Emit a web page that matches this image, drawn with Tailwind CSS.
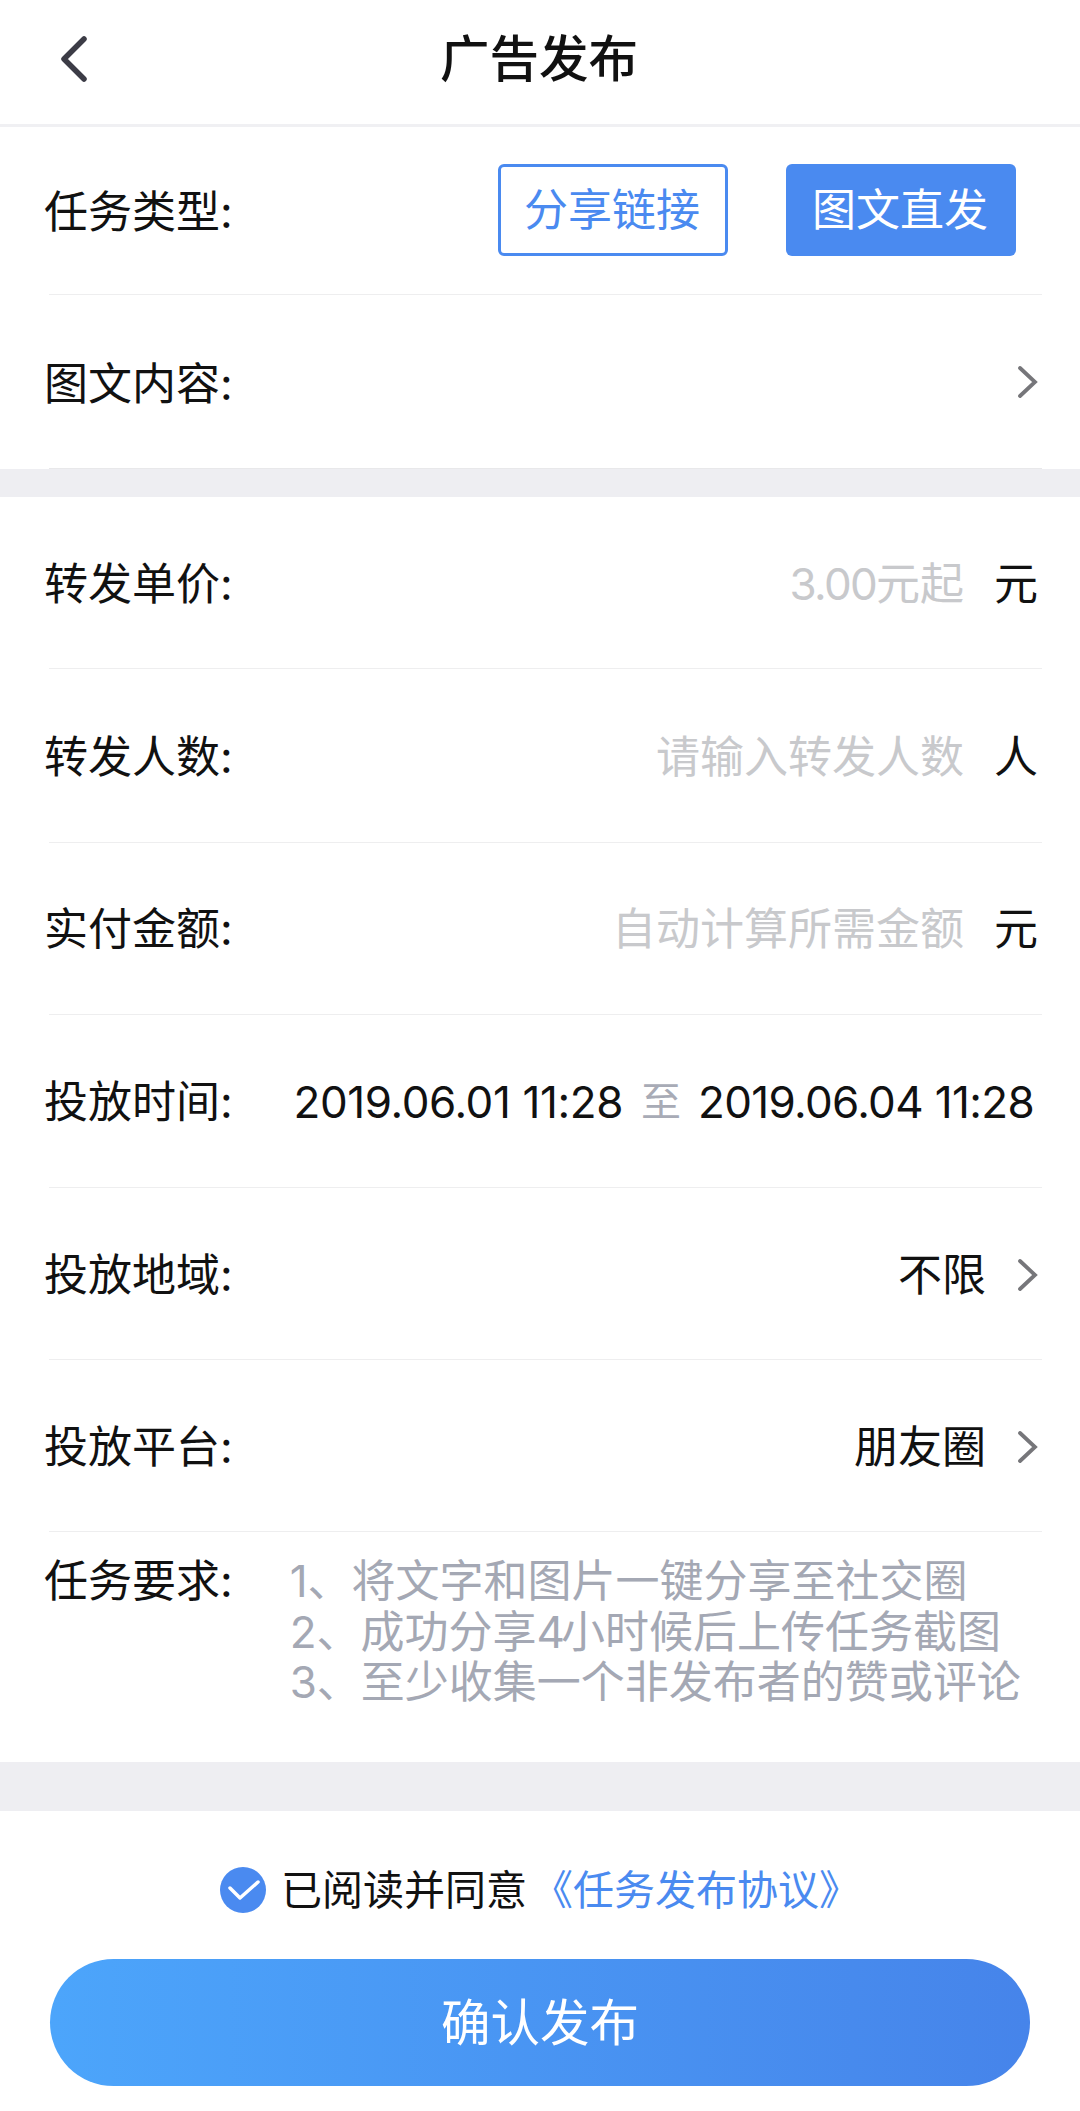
<!DOCTYPE html>
<html lang="zh-CN">
<head>
<meta charset="utf-8">
<script src="https://cdn.jsdelivr.net/npm/@tailwindcss/browser@4"></script>
</head>
<body class="m-0 bg-white font-['Inter','Noto_Sans_CJK_SC',sans-serif] text-[#111111] text-[44px] leading-[50px]">
<div class="w-[1080px] h-[2111px] flex flex-col overflow-hidden">
  <header class="h-[127px] shrink-0 border-b-[3px] border-[#f0f0f3] flex items-center justify-center relative">
    <svg class="absolute left-[59px] top-[34px]" width="30" height="50" viewBox="0 0 30 50" fill="none"><path d="M25 5 L5 25 L25 45" stroke="#3c3c46" stroke-width="5.5" stroke-linecap="round" stroke-linejoin="round"/></svg>
    <h1 class="text-[49.5px] font-medium leading-[60px] -mt-[6px] -ml-[2px]">广告发布</h1>
  </header>
  <section class="shrink-0 pl-[49px] pr-[38px]">
    <div class="h-[168px] border-b border-[#eeeeef] flex items-center justify-between">
      <span class="-ml-[5px] pt-[2px]">任务类型:</span>
      <div class="flex gap-[58px] mr-[26px] -mt-[2px]">
        <span class="w-[230px] h-[92px] rounded-[6px] border-[3px] border-[#4a8af0] text-[#4a8af0] flex items-center justify-center pt-[1px]"><span class="-ml-[2px]">分享链接</span></span>
        <span class="w-[230px] h-[92px] rounded-[6px] bg-[#4a8af0] text-white flex items-center justify-center pt-[1px]"><span class="-ml-[2px]">图文直发</span></span>
      </div>
    </div>
    <div class="h-[174px] flex items-center justify-between border-b border-[#e8e8ea]">
      <span class="-ml-[5px] pt-[4px]">图文内容:</span>
      <svg width="22" height="32" viewBox="0 0 22 32" fill="none" class="mr-[3px]"><path d="M3 2 L18 16 L3 30" stroke="#76767a" stroke-width="3.8" stroke-linecap="round" stroke-linejoin="miter"/></svg>
    </div>
  </section>
  <div class="h-[28px] shrink-0 bg-[#eeeef2]"></div>
  <section class="shrink-0 pl-[49px] pr-[38px]">
    <div class="h-[172px] border-b border-[#eeeeef] flex items-center pt-[2px]">
      <span class="-ml-[5px]">转发单价:</span>
      <span class="ml-auto text-[#c8c9cc]"><span class="tracking-[-1.7px]">3.00</span>元起</span>
      <span class="ml-[30px] mr-[4px]">元</span>
    </div>
    <div class="h-[174px] border-b border-[#eeeeef] flex items-center pt-[2px]">
      <span class="-ml-[5px]">转发人数:</span>
      <span class="ml-auto text-[#c8c9cc]">请输入转发人数</span>
      <span class="ml-[30px] mr-[4px]">人</span>
    </div>
    <div class="h-[172px] border-b border-[#eeeeef] flex items-center">
      <span class="-ml-[5px]">实付金额:</span>
      <span class="ml-auto text-[#c8c9cc]">自动计算所需金额</span>
      <span class="ml-[30px] mr-[4px]">元</span>
    </div>
    <div class="h-[173px] border-b border-[#eeeeef] flex items-center pt-[2px]">
      <span class="-ml-[5px]">投放时间:</span>
      <span class="ml-auto tracking-[-0.4px]">2019.06.01 11:28</span>
      <span class="ml-[18px] mr-[17px] text-[#a8abb6] text-[40px]">至</span>
      <span class="tracking-[-0.65px] mr-[8px]">2019.06.04 11:28</span>
    </div>
    <div class="h-[172px] border-b border-[#eeeeef] flex items-center pt-[2px]">
      <span class="-ml-[5px]">投放地域:</span>
      <span class="ml-auto">不限</span>
      <svg width="22" height="32" viewBox="0 0 22 32" fill="none" class="ml-[31px] mr-[3px]"><path d="M3 2 L18 16 L3 30" stroke="#76767a" stroke-width="3.8" stroke-linecap="round" stroke-linejoin="miter"/></svg>
    </div>
    <div class="h-[172px] border-b border-[#eeeeef] flex items-center pt-[2px]">
      <span class="-ml-[5px]">投放平台:</span>
      <span class="ml-auto">朋友圈</span>
      <svg width="22" height="32" viewBox="0 0 22 32" fill="none" class="ml-[31px] mr-[3px]"><path d="M3 2 L18 16 L3 30" stroke="#76767a" stroke-width="3.8" stroke-linecap="round" stroke-linejoin="miter"/></svg>
    </div>
    <div class="h-[230px] flex items-start pt-[24px]">
      <span class="-ml-[5px] shrink-0">任务要求:</span>
      <div class="ml-[57px] text-[#a4a8b4] whitespace-nowrap">
        <p>1、将文字和图片一键分享至社交圈</p>
        <p class="pt-[1px]">2、成功分享<span class="tracking-[-4px]">4</span>小时候后上传任务截图</p>
        <p>3、至少收集一个非发布者的赞或评论</p>
      </div>
    </div>
  </section>
  <div class="h-[49px] shrink-0 bg-[#eeeef2]"></div>
  <section class="shrink-0 px-[50px]">
    <div class="h-[148px] flex items-center justify-center text-[41px]">
      <svg width="46" height="46" viewBox="0 0 46 46" class="mr-[15px] mt-[10px]"><circle cx="23" cy="23" r="23" fill="#4a8af0"/><path d="M10 21 L20 31 L38 15" fill="none" stroke="white" stroke-width="3.5" stroke-linecap="round" stroke-linejoin="round"/></svg>
      <span class="mt-[10px]">已阅读并同意</span>
      <span class="text-[#4a8af0] mt-[10px] ml-[5px]">《任务发布协议》</span>
    </div>
    <button class="w-[980px] h-[127px] rounded-full bg-gradient-to-r from-[#4ca5fb] to-[#4684ea] text-white text-[49.5px] leading-[60px] flex items-center justify-center">确认发布</button>
  </section>
</div>
</body>
</html>
